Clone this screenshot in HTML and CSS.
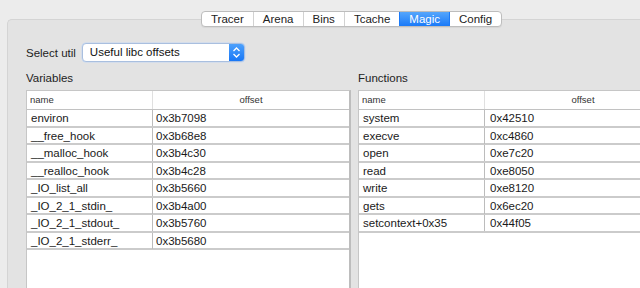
FILE: index.html
```html
<!DOCTYPE html>
<html>
<head>
<meta charset="utf-8">
<link rel="stylesheet" href="styles.css">
</head>
<body>
<div class="tabbar">
  <div class="tabs">
    <div class="tab">Tracer</div>
    <div class="tab">Arena</div>
    <div class="tab">Bins</div>
    <div class="tab">Tcache</div>
    <div class="tab active">Magic</div>
    <div class="tab">Config</div>
  </div>
</div>
<div class="box">
  <div class="select-row">
    <span class="select-label">Select util</span>
    <div class="select">
      <span class="select-text">Useful libc offsets</span>
      <span class="stepper">
        <svg width="15" height="17" viewBox="0 0 15 17"><path d="M4.5 7 L7.5 4 L10.5 7" fill="none" stroke="#fff" stroke-width="1.3"/><path d="M4.5 10 L7.5 13 L10.5 10" fill="none" stroke="#fff" stroke-width="1.3"/></svg>
      </span>
    </div>
  </div>
  <div class="columns">
    <div class="col col-left">
      <div class="section-label">Variables</div>
      <div class="table table-left">
        <div class="thead">
          <div class="th th-name">name</div>
          <div class="th th-offset">offset</div>
        </div>
        <div class="tr"><div class="td">environ</div><div class="td td-off">0x3b7098</div></div>
        <div class="tr"><div class="td">__free_hook</div><div class="td td-off">0x3b68e8</div></div>
        <div class="tr"><div class="td">__malloc_hook</div><div class="td td-off">0x3b4c30</div></div>
        <div class="tr"><div class="td">__realloc_hook</div><div class="td td-off">0x3b4c28</div></div>
        <div class="tr"><div class="td">_IO_list_all</div><div class="td td-off">0x3b5660</div></div>
        <div class="tr"><div class="td">_IO_2_1_stdin_</div><div class="td td-off">0x3b4a00</div></div>
        <div class="tr"><div class="td">_IO_2_1_stdout_</div><div class="td td-off">0x3b5760</div></div>
        <div class="tr"><div class="td">_IO_2_1_stderr_</div><div class="td td-off">0x3b5680</div></div>
      </div>
    </div>
    <div class="col col-right">
      <div class="section-label">Functions</div>
      <div class="table table-right">
        <div class="thead">
          <div class="th th-name">name</div>
          <div class="th th-offset">offset</div>
        </div>
        <div class="tr"><div class="td">system</div><div class="td td-off">0x42510</div></div>
        <div class="tr"><div class="td">execve</div><div class="td td-off">0xc4860</div></div>
        <div class="tr"><div class="td">open</div><div class="td td-off">0xe7c20</div></div>
        <div class="tr"><div class="td">read</div><div class="td td-off">0xe8050</div></div>
        <div class="tr"><div class="td">write</div><div class="td td-off">0xe8120</div></div>
        <div class="tr"><div class="td">gets</div><div class="td td-off">0x6ec20</div></div>
        <div class="tr"><div class="td">setcontext+0x35</div><div class="td td-off">0x44f05</div></div>
      </div>
    </div>
  </div>
</div>
</body>
</html>
```
FILE: styles.css
```css
html, body {
  margin: 0;
  padding: 0;
}
body {
  width: 640px;
  height: 288px;
  overflow: hidden;
  background: #ececec;
  font-family: "Liberation Sans", Arial, sans-serif;
  font-size: 11.5px;
  color: #1d1d1d;
}
.tabbar {
  display: flex;
  padding-top: 11px;
  padding-left: 201px;
  position: relative;
  z-index: 1;
}
.tabs {
  display: flex;
  height: 14px;
  border: 1px solid #bdbdbd;
  border-radius: 4px;
  background: #fff;
  overflow: hidden;
  box-shadow: 0 1px 1px rgba(0,0,0,0.06);
}
.tab {
  padding: 0 9px;
  line-height: 14px;
  border-left: 1px solid #d2d2d2;
  color: #222;
}
.tab:first-child {
  border-left: 0;
}
.tab.active {
  background: linear-gradient(#55a6fc, #1a7af8);
  color: #fff;
  border-left-color: #1a7af8;
}
.tab.active + .tab {
  border-left-color: #1a7af8;
}
.box {
  margin-top: -8px;
  margin-left: 7px;
  width: 615px;
  height: 246px;
  background: #e3e3e3;
  border: 1px solid #d4d4d4;
  border-right: 0;
  border-bottom: 0;
  border-radius: 5px 0 0 0;
  padding: 23px 0 0 18px;
}
.select-row {
  display: flex;
  align-items: center;
  gap: 6px;
  height: 19px;
}
.select {
  width: 163px;
  height: 19px;
  box-sizing: border-box;
  border: 1px solid #a9bfdf;
  border-radius: 4px;
  background: #fff;
  display: flex;
  align-items: center;
  justify-content: space-between;
  overflow: hidden;
  box-shadow: 0 0 0 0.5px #c5d8f3;
}
.select-text {
  padding-left: 7px;
  line-height: 17px;
  color: #111;
}
.stepper {
  width: 15px;
  height: 17px;
  background: linear-gradient(#4da1fc, #1877f6);
  display: flex;
}
.columns {
  display: flex;
  gap: 7px;
  margin-top: 9px;
}
.col-left {
  width: 325px;
}
.col-right {
  width: 282px;
}
.section-label {
  height: 14px;
  line-height: 14px;
  margin-bottom: 5px;
  color: #222;
}
.table {
  background: #fff;
  border: 1px solid #c6c6c6;
  border-bottom: 0;
  height: 198px;
  box-sizing: border-box;
}
.table-left {
  border-right: 2px solid #bdbdbd;
}
.table-right {
  border-right: 0;
  overflow: hidden;
}
.thead {
  display: grid;
  grid-template-columns: 125px 1fr;
  height: 19px;
  box-sizing: border-box;
  border-bottom: 1px solid #c2c2c2;
}
.table-right .thead,
.table-right .tr {
  grid-template-columns: 125px 197px;
}
.th {
  font-size: 9.5px;
  line-height: 18px;
  color: #333;
}
.th-name {
  padding-left: 3px;
}
.th-offset {
  text-align: center;
  border-left: 1px solid #e0e0e0;
}
.tr {
  display: grid;
  grid-template-columns: 125px 1fr;
  height: 17.5px;
  box-sizing: border-box;
  border-bottom: 2px solid #cbcbcb;
}
.td {
  padding-left: 4px;
  line-height: 16px;
  color: #1a1a1a;
}
.td-off {
  border-left: 1px solid #bcbcbc;
  padding-left: 3px;
}
.table-right .td-off {
  padding-left: 5px;
}
```
